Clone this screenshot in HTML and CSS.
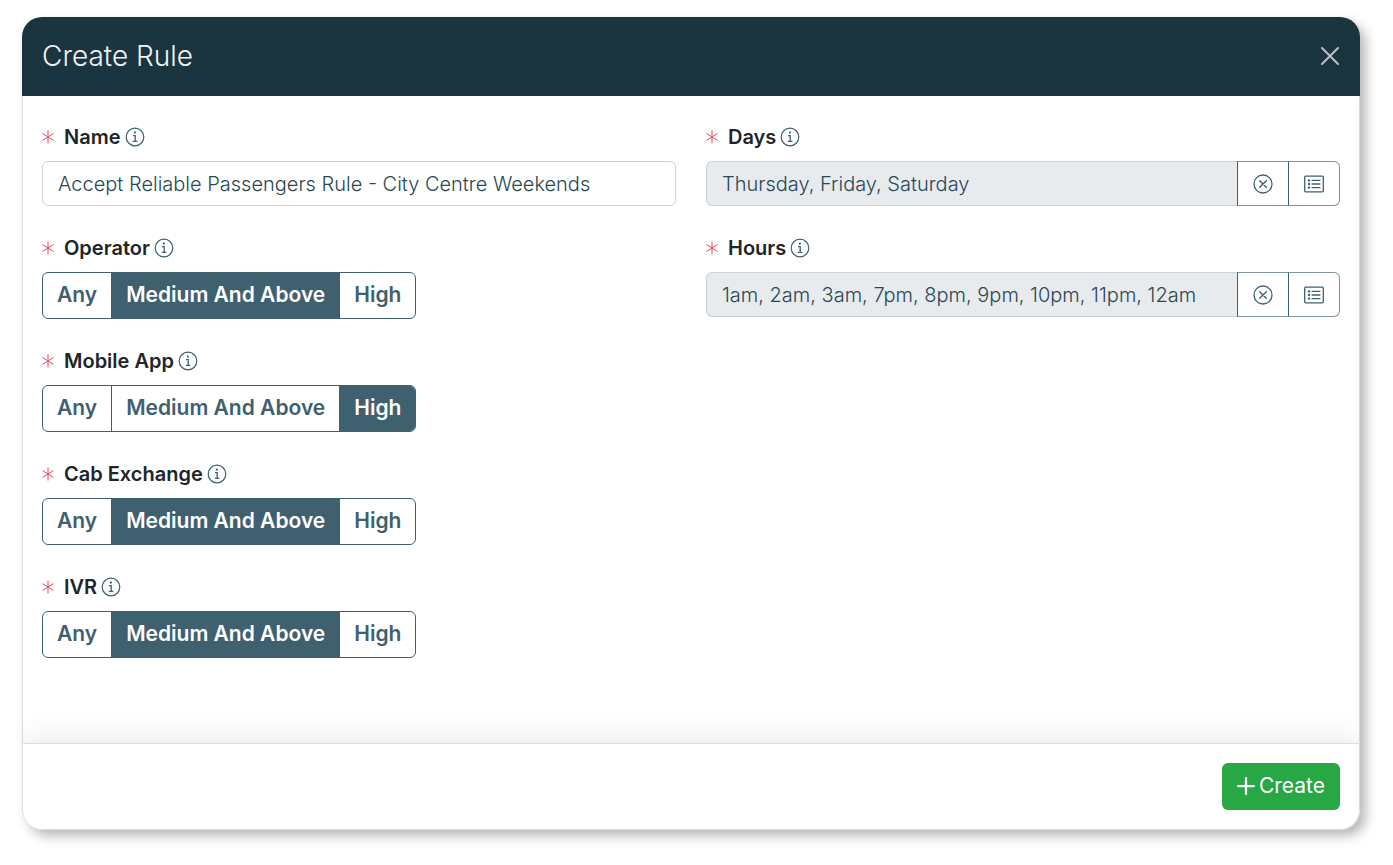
FILE: index.html
```html
<!DOCTYPE html>
<html lang="en">
<head>
    <meta charset="UTF-8">
    <meta name="viewport" content="width=device-width, initial-scale=1.0">
    <title>Create Rule</title>
    <link rel="stylesheet" href="styles.css">
</head>
<body>
    <!-- Shared icons -->
    <svg class="sprite" aria-hidden="true">
        <symbol id="icon-required" viewBox="0 0 12 14">
            <path d="M6 .5v13M.5 3.6l11 6.8M11.5 3.6l-11 6.8" fill="none" stroke="currentColor" />
        </symbol>
        <symbol id="icon-info" viewBox="0 0 20 20">
            <circle cx="10" cy="10" r="8.8" fill="none" stroke="currentColor" stroke-width="1.2" />
            <circle cx="9.9" cy="5.6" r="1.1" fill="currentColor" />
            <path d="M8 8.6h2.2v5.6M7.8 14.3h4.6" fill="none" stroke="currentColor" stroke-width="1.3" />
        </symbol>
        <symbol id="icon-clear" viewBox="0 0 20 20">
            <circle cx="10" cy="10" r="9" fill="none" stroke="currentColor" stroke-width="1.3" />
            <path d="M6.7 6.7l6.6 6.6M13.3 6.7l-6.6 6.6" fill="none" stroke="currentColor" stroke-width="1.4" stroke-linecap="round" />
        </symbol>
        <symbol id="icon-list" viewBox="0 0 20 18">
            <rect x=".7" y="1.2" width="18.6" height="15.6" rx="1" fill="none" stroke="currentColor" stroke-width="1.3" />
            <path d="M7.6 5.4h8.8M7.6 9h8.8M7.6 12.6h8.8" fill="none" stroke="currentColor" stroke-width="1.3" />
            <g fill="currentColor">
                <circle cx="5" cy="5.4" r="1.2" />
                <circle cx="5" cy="9" r="1.2" />
                <circle cx="5" cy="12.6" r="1.2" />
            </g>
        </symbol>
    </svg>

    <form class="modal">
        <header class="modal-header">
            <h1>Create Rule</h1>
            <button type="button" class="close-btn" title="Close">
                <svg viewBox="0 0 18 18"><path d="M1 1l16 16M17 1L1 17" fill="none" stroke="currentColor" stroke-width="2" stroke-linecap="round" /></svg>
            </button>
        </header>

        <main class="modal-body">
            <div class="column">
                <div class="field">
                    <label class="field-label" for="name">
                        <svg class="required"><use href="#icon-required" /></svg>
                        Name
                        <svg class="info"><use href="#icon-info" /></svg>
                    </label>
                    <input type="text" class="text-input" id="name" value="Accept Reliable Passengers Rule - City Centre Weekends">
                </div>

                <fieldset class="field">
                    <legend class="field-label">
                        <svg class="required"><use href="#icon-required" /></svg>
                        Operator
                        <svg class="info"><use href="#icon-info" /></svg>
                    </legend>
                    <div class="btn-group">
                        <label><input type="radio" name="operator" value="any">Any</label>
                        <label><input type="radio" name="operator" value="medium" checked>Medium And Above</label>
                        <label><input type="radio" name="operator" value="high">High</label>
                    </div>
                </fieldset>

                <fieldset class="field">
                    <legend class="field-label">
                        <svg class="required"><use href="#icon-required" /></svg>
                        Mobile App
                        <svg class="info"><use href="#icon-info" /></svg>
                    </legend>
                    <div class="btn-group">
                        <label><input type="radio" name="mobile" value="any">Any</label>
                        <label><input type="radio" name="mobile" value="medium">Medium And Above</label>
                        <label><input type="radio" name="mobile" value="high" checked>High</label>
                    </div>
                </fieldset>

                <fieldset class="field">
                    <legend class="field-label">
                        <svg class="required"><use href="#icon-required" /></svg>
                        Cab Exchange
                        <svg class="info"><use href="#icon-info" /></svg>
                    </legend>
                    <div class="btn-group">
                        <label><input type="radio" name="exchange" value="any">Any</label>
                        <label><input type="radio" name="exchange" value="medium" checked>Medium And Above</label>
                        <label><input type="radio" name="exchange" value="high">High</label>
                    </div>
                </fieldset>

                <fieldset class="field">
                    <legend class="field-label">
                        <svg class="required"><use href="#icon-required" /></svg>
                        IVR
                        <svg class="info"><use href="#icon-info" /></svg>
                    </legend>
                    <div class="btn-group">
                        <label><input type="radio" name="ivr" value="any">Any</label>
                        <label><input type="radio" name="ivr" value="medium" checked>Medium And Above</label>
                        <label><input type="radio" name="ivr" value="high">High</label>
                    </div>
                </fieldset>
            </div>

            <div class="column">
                <div class="field">
                    <label class="field-label" for="days">
                        <svg class="required"><use href="#icon-required" /></svg>
                        Days
                        <svg class="info"><use href="#icon-info" /></svg>
                    </label>
                    <div class="input-group">
                        <input type="text" class="text-input" id="days" value="Thursday, Friday, Saturday" readonly>
                        <button type="button" title="Clear days"><svg class="clear"><use href="#icon-clear" /></svg></button>
                        <button type="button" title="Select days"><svg class="list"><use href="#icon-list" /></svg></button>
                    </div>
                </div>

                <div class="field">
                    <label class="field-label" for="hours">
                        <svg class="required"><use href="#icon-required" /></svg>
                        Hours
                        <svg class="info"><use href="#icon-info" /></svg>
                    </label>
                    <div class="input-group">
                        <input type="text" class="text-input" id="hours" value="1am, 2am, 3am, 7pm, 8pm, 9pm, 10pm, 11pm, 12am" readonly>
                        <button type="button" title="Clear hours"><svg class="clear"><use href="#icon-clear" /></svg></button>
                        <button type="button" title="Select hours"><svg class="list"><use href="#icon-list" /></svg></button>
                    </div>
                </div>
            </div>
        </main>

        <footer class="modal-footer">
            <button type="submit" class="create-btn">
                <svg viewBox="0 0 16 16"><path d="M8 1v14M1 8h14" fill="none" stroke="currentColor" stroke-width="2" stroke-linecap="round" /></svg>
                Create
            </button>
        </footer>
    </form>
</body>
</html>
```

FILE: styles.css
```css
* {
    margin: 0;
    padding: 0;
    box-sizing: border-box;
}

body {
    display: flex;
    min-height: 100vh;
    padding: 17px 33px 35px 22px;
    background-color: #fff;
    color: #212529;
    font-family: Inter, "Open Sans", sans-serif;
    font-size: 20px;
}

button,
input {
    font: inherit;
}

button {
    cursor: pointer;
}

.sprite {
    position: absolute;
    width: 0;
    height: 0;
}

/* Modal */
.modal {
    flex: 1;
    display: flex;
    flex-direction: column;
    border-radius: 20px;
    overflow: hidden;
    box-shadow: 6px 6px 12px rgba(0, 0, 0, 0.28);
}

.modal-header {
    display: flex;
    align-items: center;
    justify-content: space-between;
    height: 79px;
    padding: 0 20px 2px;
    background-color: #1a3440;
    color: #f1f3f4;
}

.modal-header h1 {
    font-size: 28px;
    font-weight: 300;
}

.close-btn {
    display: flex;
    padding: 1px;
    border: none;
    background: none;
    color: #bac2c6;
}

.close-btn svg {
    width: 18px;
    height: 18px;
}

.modal-body {
    flex: 1;
    display: grid;
    grid-template-columns: 1fr 1fr;
    gap: 30px;
    padding: 29px 19px;
    border: 1px solid #dcdcdc;
    border-width: 0 1px;
}

.column {
    display: flex;
    flex-direction: column;
    gap: 30px;
    min-width: 0;
}

/* Fields */
.field {
    border: none;
    min-width: 0;
}

.field-label {
    display: flex;
    align-items: center;
    gap: 4px;
    height: 24px;
    margin-bottom: 12px;
    font-weight: 600;
}

.required {
    width: 12px;
    height: 14px;
    margin-right: 6px;
    color: #e84a5f;
}

.info {
    width: 20px;
    height: 20px;
    color: #3f606f;
}

.text-input {
    display: block;
    width: 100%;
    height: 45px;
    padding: 0 15px;
    border: 1px solid #ccd1d9;
    border-radius: 6px;
    background-color: #fff;
    color: #2b4755;
    font-weight: 300;
}

.text-input:read-only {
    background-color: #e7ebee;
}

.input-group {
    display: flex;
}

.input-group .text-input {
    flex: 1;
    min-width: 0;
    border-right: none;
    border-radius: 6px 0 0 6px;
}

.input-group button {
    display: flex;
    align-items: center;
    justify-content: center;
    width: 52px;
    border: 1px solid #80949e;
    border-left-color: #3f606f;
    background-color: #fff;
    color: #3f606f;
}

.input-group button:last-child {
    margin-left: -1px;
    border-radius: 0 6px 6px 0;
}

.clear {
    width: 20px;
    height: 20px;
}

.list {
    width: 20px;
    height: 18px;
}

/* Segmented radio buttons */
.btn-group {
    display: inline-flex;
    height: 47px;
    vertical-align: top;
    border: 1px solid #3f606f;
    border-radius: 6px;
    overflow: hidden;
    color: #3f606f;
    font-size: 21px;
    font-weight: 600;
}

.btn-group label {
    position: relative;
    display: flex;
    align-items: center;
    padding: 0 14px 2px;
    cursor: pointer;
}

.btn-group label + label {
    border-left: 1px solid #3f606f;
}

.btn-group label:has(:checked) {
    background-color: #3f606f;
    color: #fff;
}

.btn-group input {
    position: absolute;
    inset: 0;
    opacity: 0;
}

/* Footer */
.modal-footer {
    display: flex;
    align-items: center;
    justify-content: flex-end;
    height: 87px;
    padding: 0 19px;
    border: 1px solid #dcdcdc;
    border-radius: 0 0 20px 20px;
    background-color: #fff;
    box-shadow: 0 0 32px rgba(0, 0, 0, 0.12);
}

.create-btn {
    display: flex;
    align-items: center;
    gap: 4px;
    height: 47px;
    padding: 0 15px 2px;
    border: none;
    border-radius: 6px;
    background-color: #28a745;
    color: #fff;
    font-size: 21px;
}

.create-btn svg {
    width: 18px;
    height: 18px;
}
```
